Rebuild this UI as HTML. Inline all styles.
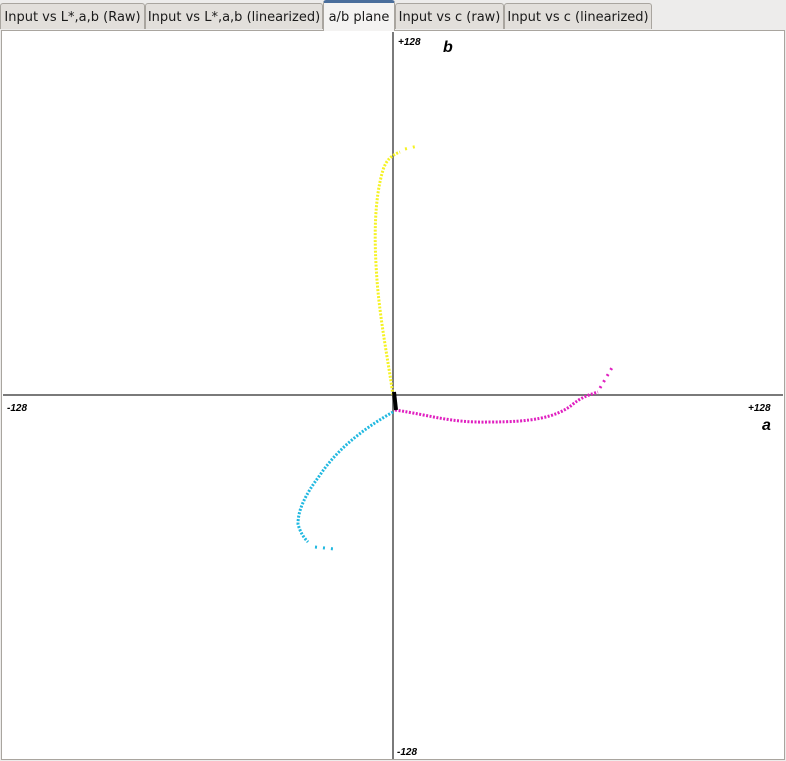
<!DOCTYPE html>
<html><head><meta charset="utf-8"><style>
html,body{margin:0;padding:0;width:786px;height:761px;overflow:hidden;background:#edeceb;font-family:"DejaVu Sans","Liberation Sans",sans-serif;}
.tab{position:absolute;top:3px;height:26px;background:#e2dfdb;border:1px solid #a9a59f;border-bottom:none;border-radius:3px 3px 0 0;font-size:13px;line-height:27px;color:#1a1a1a;text-align:center;box-sizing:border-box;}
.act{top:0;height:31px;background:#f4f3f2;border-top:3px solid #4a6e9c;line-height:29px;z-index:2;}
.panel{position:absolute;left:1px;top:30px;width:784px;height:730px;background:#fff;border:1px solid #a9a59f;box-sizing:border-box;}
</style></head><body>
<div class="tab" style="left:0;width:145px">Input vs L*,a,b (Raw)</div>
<div class="tab" style="left:145px;width:178px">Input vs L*,a,b (linearized)</div>
<div class="tab act" style="left:323px;width:72px">a/b plane</div>
<div class="tab" style="left:395px;width:109px">Input vs c (raw)</div>
<div class="tab" style="left:504px;width:148px">Input vs c (linearized)</div>
<div class="panel"></div>
<svg style="position:absolute;left:0;top:0;z-index:3" width="786" height="761">
<line x1="393" y1="32" x2="393" y2="759" stroke="#7a7a7a" stroke-width="2"/>
<line x1="3" y1="395" x2="783" y2="395" stroke="#7a7a7a" stroke-width="2"/>
<g font-family="Liberation Sans,sans-serif" font-weight="bold" font-style="italic" fill="#000">
<text x="398" y="45" font-size="10">+128</text>
<text x="443" y="52" font-size="16">b</text>
<text x="7" y="411" font-size="10">-128</text>
<text x="748" y="411" font-size="10">+128</text>
<text x="762" y="430" font-size="16">a</text>
<text x="397" y="755" font-size="10">-128</text>
</g>
<g fill="none" stroke-width="3" stroke-dasharray="2 1.5">
<path d="M393,395 C388,360 380,320 377,280 C374,240 374,200 383,170 C386,160 392,155 400,152" stroke="#f5f224"/>
<path d="M405,149 L418,146" stroke="#f5f224" stroke-dasharray="2 6"/>
<path d="M395,410 C430,415 450,423 490,422 C530,422 555,418 572,405 C580,398 588,395 598,392" stroke="#e020c0"/>
<path d="M600,388 L613,366" stroke="#e020c0" stroke-dasharray="2 5"/>
<path d="M393,412 C370,425 340,445 320,475 C305,495 298,510 298,524 C300,532 304,538 308,542" stroke="#20b8e0"/>
<path d="M315,547 L334,549" stroke="#20b8e0" stroke-dasharray="2 6"/>
</g>
<line x1="394" y1="392" x2="396" y2="410" stroke="#000" stroke-width="4"/>
</svg>
</body></html>
